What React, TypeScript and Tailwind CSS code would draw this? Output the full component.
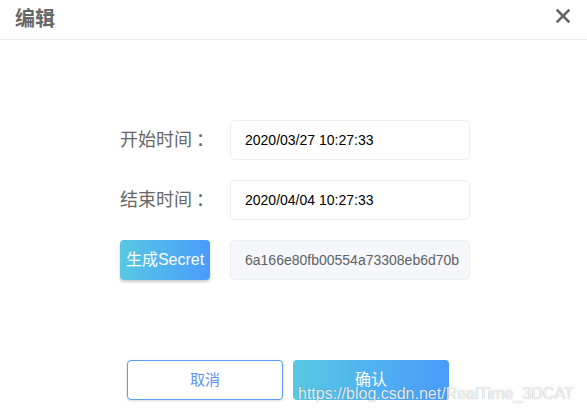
import React from "react"

const font = { fontFamily: '"Liberation Sans", "Noto Sans CJK SC", sans-serif' }

function Field({ label, value }: { label: string; value: string }) {
  return (
    <div className="flex items-center">
      <div className="w-[110px] text-[18px] text-[#666]">
        {label}
        <span className="ml-[4px]">：</span>
      </div>
      <div className="w-[240px] h-[40px] flex items-center px-[14px] border border-[#ebeef5] rounded-[5px] bg-white text-[14px] text-black">
        {value}
      </div>
    </div>
  )
}

export default function App() {
  return (
    <div className="relative w-[587px] h-[414px] bg-white overflow-hidden" style={font}>
      <header className="h-[40px] border-b border-[#ebebeb] flex justify-between pl-[15px] pr-[17px]">
        <h1 className="text-[20px] font-bold text-[#666] leading-[39px]">编辑</h1>
        <svg className="mt-[9px]" width="14" height="14" viewBox="0 0 14 14">
          <path d="M1.5 1.5 L12.5 12.5 M12.5 1.5 L1.5 12.5" stroke="#666" strokeWidth="2.6" strokeLinecap="square" />
        </svg>
      </header>

      <div className="pt-[80px] pl-[120px] flex flex-col gap-[20px]">
        <Field label="开始时间" value="2020/03/27 10:27:33" />
        <Field label="结束时间" value="2020/04/04 10:27:33" />
        <div className="flex items-center">
          <div className="w-[110px]">
            <button className="w-[90px] h-[40px] rounded-[4px] bg-linear-to-r from-[#58c8e2] to-[#4b9bfb] text-white text-[16px] shadow-[0_2px_3px_rgba(0,0,0,0.2)]">
              生成Secret
            </button>
          </div>
          <div className="w-[240px] h-[40px] flex items-center pl-[14px] border border-[#ebeef5] rounded-[5px] bg-[#f5f7fa] text-[14px] text-[#606266] overflow-hidden whitespace-nowrap">
            6a166e80fb00554a73308eb6d70b
          </div>
        </div>
      </div>

      <div className="mt-[80px] pl-[127px] flex gap-[10px]">
        <button className="w-[156px] h-[40px] rounded-[4px] border border-[#5b9cf8] bg-white text-[15px] text-[#5e93f5] shadow-[0_1px_3px_rgba(0,0,0,0.15)]">
          取消
        </button>
        <button className="w-[156px] h-[40px] rounded-[4px] bg-linear-to-r from-[#58c8e2] to-[#4b9bfb] text-white text-[16px]">
          确认
        </button>
      </div>

      <div className="absolute left-[298px] top-[382px] text-[16px] text-white/90 [text-shadow:0_0_1px_rgba(0,0,0,0.45)] whitespace-nowrap">
        https://blog.csdn.net/RealTime_3DCAT
      </div>
    </div>
  )
}
